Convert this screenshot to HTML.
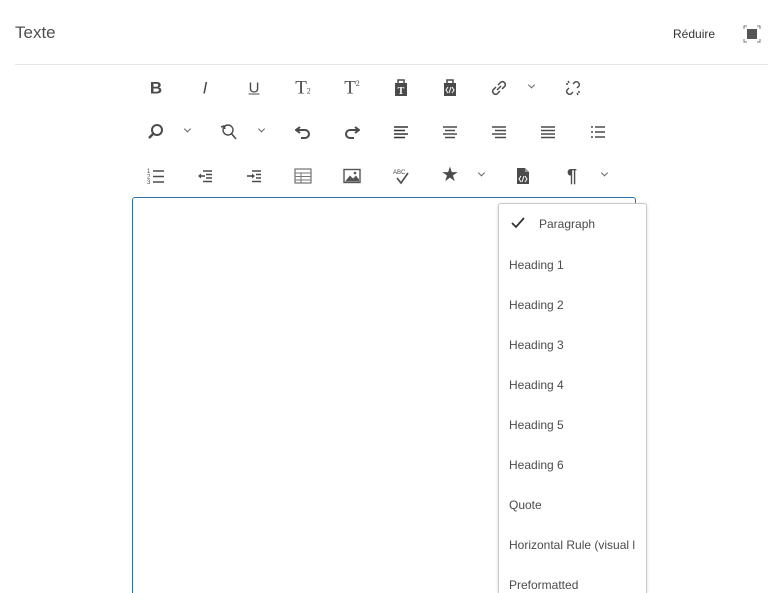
<!DOCTYPE html>
<html style="overflow:hidden;width:768px;height:593px"><head><meta charset="utf-8"><style>
body{margin:0;width:768px;height:593px;overflow:hidden;background:#fff;font-family:"Liberation Sans",sans-serif;position:relative}
.a{position:absolute}
.ic{position:absolute;transform:translate(-50%,-50%);color:#4b4b4b;font-size:17px;line-height:1}
.ch{position:absolute;transform:translate(-50%,-50%);width:4px;height:4px;border-right:1px solid #666;border-bottom:1px solid #666;rotate:45deg;margin-top:-2px}
.it{position:absolute;left:509px;font-size:12px;color:#4b4b4b}
</style></head><body>
<div class="a" style="left:15px;top:23px;font-size:17px;color:#505050">Texte</div>
<div class="a" style="left:673px;top:27px;font-size:12px;color:#333">Réduire</div>
<svg class="a" style="left:743px;top:25px" width="18" height="18" viewBox="0 0 18 18"><rect x="4" y="4" width="10" height="10" fill="#555"/><path d="M1 4V1H4M14 1H17V4M17 14V17H14M4 17H1V14" stroke="#777" fill="none"/></svg>
<div class="a" style="left:15px;top:64px;width:753px;height:1px;background:#e6e6e6"></div>

<div class="ic" style="left:156px;top:88px;font-weight:bold">B</div>
<div class="ic" style="left:205px;top:88px;font-style:italic">I</div>
<div class="ic" style="left:254px;top:88px;text-decoration:underline;font-size:15px">U</div>
<div class="ic" style="left:303px;top:88px;font-family:'Liberation Serif';font-size:19px">T<span style="font-size:8px">2</span></div>
<div class="ic" style="left:352px;top:88px;font-family:'Liberation Serif';font-size:19px">T<sup style="font-size:8px">2</sup></div>
<svg class="ic" style="left:401px;top:88px" width="14" height="18" viewBox="0 0 14 18"><rect x="1" y="4" width="12" height="13" fill="#4b4b4b"/><rect x="4" y="1" width="6" height="4" fill="none" stroke="#4b4b4b" stroke-width="1.5"/><text x="7" y="15" font-size="10" fill="#fff" text-anchor="middle" font-weight="bold" font-family="Liberation Serif">T</text></svg>
<svg class="ic" style="left:450px;top:88px" width="14" height="18" viewBox="0 0 14 18"><rect x="1" y="4" width="12" height="13" fill="#4b4b4b"/><rect x="4" y="1" width="6" height="4" fill="none" stroke="#4b4b4b" stroke-width="1.5"/><path d="M5 8L3 11L5 14M9 8L11 11L9 14M8 8L6 14" stroke="#fff" fill="none"/></svg>
<svg class="ic" style="left:499px;top:88px" width="18" height="18" viewBox="0 0 18 18"><path d="M8 6L11 3A3 3 0 0 1 15 7L12 10M10 12L7 15A3 3 0 0 1 3 11L6 8M7 11L11 7" stroke="#4b4b4b" stroke-width="1.5" fill="none"/></svg>
<div class="ch" style="left:529px;top:88px"></div>
<svg class="ic" style="left:573px;top:88px" width="18" height="18" viewBox="0 0 18 18"><path d="M9 5L11 3A3 3 0 0 1 15 7L13 9M9 13L7 15A3 3 0 0 1 3 11L5 9M4 2L5 4M2 5L4 5M14 16L13 14M16 13L14 13" stroke="#4b4b4b" stroke-width="1.4" fill="none"/></svg>

<svg class="ic" style="left:156px;top:132px" width="18" height="18" viewBox="0 0 18 18"><circle cx="10" cy="7" r="5" stroke="#4b4b4b" stroke-width="2" fill="none"/><path d="M6.5 10.5L2 15" stroke="#4b4b4b" stroke-width="2.4"/></svg>
<div class="ch" style="left:185px;top:132px"></div>
<svg class="ic" style="left:229px;top:132px" width="20" height="18" viewBox="0 0 20 18"><circle cx="9" cy="7" r="5" stroke="#4b4b4b" stroke-width="1.4" fill="none"/><path d="M12 10L17 16M2 4L5 3L6 6" stroke="#4b4b4b" stroke-width="1.6" fill="none"/></svg>
<div class="ch" style="left:259px;top:132px"></div>
<svg class="ic" style="left:303px;top:132px" width="16" height="14" viewBox="0 0 16 14"><path d="M5 2L1 5L5 8M1 5H10A4 4 0 0 1 10 13H6" stroke="#4b4b4b" stroke-width="2" fill="none"/></svg>
<svg class="ic" style="left:352px;top:132px" width="16" height="14" viewBox="0 0 16 14"><path d="M11 2L15 5L11 8M15 5H6A4 4 0 0 0 6 13H10" stroke="#4b4b4b" stroke-width="2" fill="none"/></svg>
<svg class="ic" style="left:401px;top:132px" width="16" height="14" viewBox="0 0 16 14"><path d="M1 2H15M1 5.5H12M1 9H15M1 12.5H12" stroke="#333" stroke-width="1.6"/></svg>
<svg class="ic" style="left:450px;top:132px" width="16" height="14" viewBox="0 0 16 14"><path d="M1 2H15M3 5.5H13M1 9H15M3 12.5H13" stroke="#4b4b4b" stroke-width="1.4"/></svg>
<svg class="ic" style="left:499px;top:132px" width="16" height="14" viewBox="0 0 16 14"><path d="M1 2H15M4 5.5H15M1 9H15M4 12.5H15" stroke="#4b4b4b" stroke-width="1.4"/></svg>
<svg class="ic" style="left:548px;top:132px" width="16" height="14" viewBox="0 0 16 14"><path d="M1 2H15M1 5.5H15M1 9H15M1 12.5H15" stroke="#4b4b4b" stroke-width="1.4"/></svg>
<svg class="ic" style="left:598px;top:132px" width="16" height="14" viewBox="0 0 16 14"><path d="M1 2H3M1 7H3M1 12H3M5 2H15M5 7H15M5 12H15" stroke="#4b4b4b" stroke-width="1.6"/></svg>

<svg class="ic" style="left:156px;top:176px" width="18" height="18" viewBox="0 0 18 18"><text x="0" y="6" font-size="6" fill="#4b4b4b">1</text><text x="0" y="11.5" font-size="6" fill="#4b4b4b">2</text><text x="0" y="17" font-size="6" fill="#4b4b4b">3</text><path d="M6 4H17M6 9.5H17M6 15H17" stroke="#4b4b4b" stroke-width="1.6"/></svg>
<svg class="ic" style="left:205px;top:176px" width="16" height="14" viewBox="0 0 16 14"><path d="M6 2H15M9 5.5H15M9 9H15M6 12.5H15" stroke="#4b4b4b" stroke-width="1.4"/><path d="M1 7L4 4.5V9.5Z" fill="#4b4b4b"/><path d="M3 7H8" stroke="#4b4b4b" stroke-width="1.6"/></svg>
<svg class="ic" style="left:254px;top:176px" width="16" height="14" viewBox="0 0 16 14"><path d="M6 2H15M10 5.5H15M10 9H15M6 12.5H15" stroke="#4b4b4b" stroke-width="1.4"/><path d="M9 7L6 4.5V9.5Z" fill="#4b4b4b"/><path d="M1 7H7" stroke="#4b4b4b" stroke-width="1.6"/></svg>
<svg class="ic" style="left:303px;top:176px" width="18" height="16" viewBox="0 0 18 16"><rect x="1" y="1" width="16" height="14" fill="none" stroke="#555"/><path d="M1 5H17M1 8.5H17M1 12H17M7 5V15" stroke="#777"/></svg>
<svg class="ic" style="left:352px;top:176px" width="18" height="15" viewBox="0 0 18 15"><rect x="1" y="1" width="16" height="13" fill="none" stroke="#555" stroke-width="1.4"/><path d="M2 13L7 7L10 10L13 7L16 11V13Z" fill="#555"/><circle cx="12" cy="4.5" r="1.3" fill="#555"/></svg>
<svg class="ic" style="left:401px;top:176px" width="18" height="18" viewBox="0 0 18 18"><text x="1" y="7" font-size="6" fill="#4b4b4b">ABC</text><path d="M5 11L9 16L16 6" stroke="#4b4b4b" stroke-width="1.6" fill="none"/></svg>
<div class="ic" style="left:450px;top:175px;font-size:20px">★</div>
<div class="ch" style="left:479px;top:176px"></div>
<svg class="ic" style="left:523px;top:176px" width="14" height="18" viewBox="0 0 14 18"><path d="M1 1H9L13 5V17H1Z" fill="#4b4b4b"/><path d="M9 1V5H13" fill="#999"/><path d="M5 9L3 12L5 15M9 9L11 12L9 15M8 9L6 15" stroke="#fff" fill="none"/></svg>
<div class="ic" style="left:572px;top:176px;font-size:18px;font-weight:bold">¶</div>
<div class="ch" style="left:602px;top:176px"></div>

<div class="a" style="left:132px;top:197px;width:504px;height:396px;border:1px solid #2d6fa8;border-bottom:none;border-radius:3px 3px 0 0;box-sizing:border-box"></div>
<div class="a" style="left:498px;top:203px;width:149px;height:390px;background:#fff;border:1px solid #cacaca;border-bottom:none;border-radius:3px 3px 0 0;box-sizing:border-box;box-shadow:0 1px 3px rgba(0,0,0,.15)"></div>
<svg class="a" style="left:511px;top:217px" width="14" height="12" viewBox="0 0 14 12"><path d="M1 6L5 10L13 1" stroke="#333" stroke-width="1.8" fill="none"/></svg>
<div class="it" style="left:539px;top:217px">Paragraph</div>
<div class="it" style="top:258px">Heading 1</div>
<div class="it" style="top:298px">Heading 2</div>
<div class="it" style="top:338px">Heading 3</div>
<div class="it" style="top:378px">Heading 4</div>
<div class="it" style="top:418px">Heading 5</div>
<div class="it" style="top:458px">Heading 6</div>
<div class="it" style="top:498px">Quote</div>
<div class="it" style="top:538px;width:126px;overflow:hidden;white-space:nowrap">Horizontal Rule (visual line)</div>
<div class="it" style="top:578px">Preformatted</div>
</body></html>
